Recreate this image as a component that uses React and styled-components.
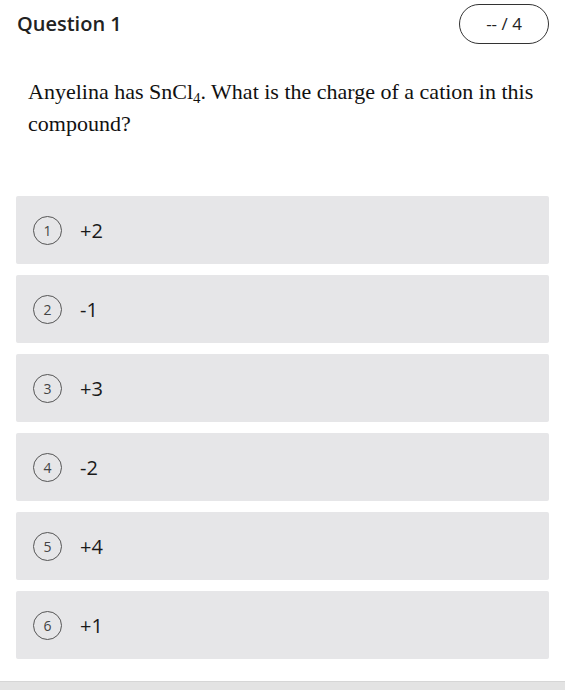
import React from 'react';
import styled, { createGlobalStyle } from 'styled-components';

const GlobalStyle = createGlobalStyle`
    html, body {
        margin: 0;
        padding: 0;
        background: #fff;
    }
    body {
        font-family: "Open Sans", "Liberation Sans", sans-serif;
        color: #1a1a1a;
    }
`;

const Page = styled.div`
    width: 565px;
    height: 700px;
    display: flex;
    flex-direction: column;
    overflow: hidden;
`;

const Header = styled.div`
    display: flex;
    justify-content: space-between;
    align-items: center;
    padding: 3px 16px 0 17px;
    height: 41px;
`;

const Title = styled.h2`
    margin: 0;
    font-size: 20px;
    font-weight: 600;
    color: #222;
`;

const Points = styled.div`
    width: 88px;
    height: 38px;
    border: 1.5px solid #333;
    border-radius: 20px;
    display: flex;
    align-items: center;
    justify-content: center;
    font-size: 17px;
    color: #222;
`;

const QuestionText = styled.p`
    margin: 32px 20px 0 28px;
    font-family: "Liberation Serif", "Times New Roman", serif;
    font-size: 22px;
    line-height: 32px;
    color: #111;
`;

const Sub = styled.sub`
    font-size: 15px;
    line-height: 0;
    vertical-align: -4px;
`;

const Options = styled.div`
    display: flex;
    flex-direction: column;
    gap: 11px;
    margin: 56px 16px 0 16px;
`;

const Option = styled.div`
    height: 68px;
    background: #e6e6e8;
    border-radius: 2px;
    display: flex;
    align-items: center;
    padding-left: 17px;
    gap: 18px;
`;

const Badge = styled.span`
    width: 27px;
    height: 27px;
    border: 1.5px solid #555;
    border-radius: 50%;
    display: flex;
    align-items: center;
    justify-content: center;
    font-size: 14px;
    color: #444;
`;

const Label = styled.span`
    font-size: 20px;
    color: #1a1a1a;
`;

const BottomBar = styled.div`
    margin-top: auto;
    margin-bottom: 10px;
    height: 8px;
    background: #e3e3e3;
    border-top: 1px solid #d6d6d6;
`;

const answers = ['+2', '-1', '+3', '-2', '+4', '+1'];

const App = () => {
    return (
        <Page>
            <GlobalStyle />
            <Header>
                <Title>Question 1</Title>
                <Points>-- / 4</Points>
            </Header>
            <QuestionText>
                Anyelina has SnCl<Sub>4</Sub>. What is the charge of a cation in this compound?
            </QuestionText>
            <Options>
                {answers.map((a, i) => (
                    <Option key={i}>
                        <Badge>{i + 1}</Badge>
                        <Label>{a}</Label>
                    </Option>
                ))}
            </Options>
            <BottomBar />
        </Page>
    );
};

export default App;
